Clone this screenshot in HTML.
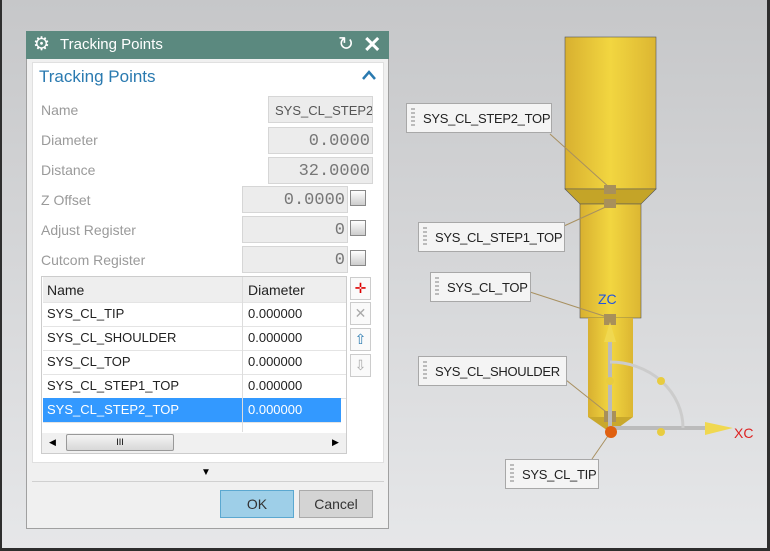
<!DOCTYPE html><html><head><style>
body{margin:0;width:770px;height:551px;overflow:hidden;font-family:"Liberation Sans",sans-serif;position:relative;background:#2e2e2e}
.a{position:absolute}
#vp{left:2px;top:0;width:765px;height:548px;background:linear-gradient(#c6c7c9,#d6d7d9 50%,#e6e7e9)}
.lbl{color:#9a9a9a;font-size:14px}
.fld{background:#ececec;border:1px solid #d6d6d6;font-family:"Liberation Mono",monospace;font-size:17px;color:#777;text-align:right;padding-right:2px;box-sizing:border-box;height:27px;line-height:27px;overflow:hidden;white-space:nowrap}
.cb{width:16px;height:16px;border:1px solid #888;background:linear-gradient(#fff,#ccc);box-sizing:border-box}
.row{left:43px;width:303px;height:24px;font-size:13px;line-height:24px;color:#222;border-bottom:1px solid #e4e4e4}
.row span{position:absolute;left:4px}.row b{position:absolute;left:205px;font-weight:normal}
.sb{width:21px;height:23px;border:1px solid #ccc;background:#fafafa;box-sizing:border-box;text-align:center;font-size:14px;line-height:21px}
.tag{background:#f4f4f4;border:1px solid #a8a8a8;font-size:13px;color:#222;height:30px;line-height:30px;box-sizing:border-box;padding-left:16px;letter-spacing:-0.3px;white-space:nowrap}
.tag:before{content:"";position:absolute;left:4px;top:4px;width:4px;height:20px;background:repeating-linear-gradient(#bbb 0 2px,transparent 2px 4px)}
</style></head><body>
<div id="vp" class="a"></div>
<svg class="a" style="left:0;top:0" width="770" height="551">
<defs><linearGradient id="g" x1="0" x2="1"><stop offset="0" stop-color="#d8b030"/><stop offset=".5" stop-color="#f2d640"/><stop offset="1" stop-color="#dcb632"/></linearGradient></defs>
<rect x="565" y="37" width="91" height="152" fill="url(#g)" stroke="#555" stroke-width=".6"/>
<polygon points="565,189 656,189 641,204 580,204" fill="#c4a428" stroke="#555" stroke-width=".6"/>
<rect x="580" y="204" width="61" height="114" fill="url(#g)" stroke="#555" stroke-width=".6"/>
<rect x="588" y="318" width="45" height="99" fill="url(#g)"/>
<polygon points="588,417 633,417 611,433" fill="#c9a82c"/>
<g stroke="#a89060" stroke-width="1"><line x1="550" y1="134" x2="610" y2="188"/><line x1="564" y1="226" x2="610" y2="205"/><line x1="530" y1="292" x2="610" y2="318"/><line x1="566" y1="380" x2="610" y2="415"/><line x1="592" y1="459" x2="610" y2="433"/></g>
<g fill="#a8905a"><rect x="604" y="185" width="12" height="9"/><rect x="604" y="199" width="12" height="9"/><rect x="604" y="314" width="12" height="11"/><rect x="604" y="411" width="12" height="11"/></g>
<line x1="610" y1="428" x2="610" y2="332" stroke="#bbb" stroke-width="4"/><polygon points="604,342 616,342 610,322" fill="#f0d850"/>
<line x1="610" y1="428" x2="705" y2="428" stroke="#bbb" stroke-width="4"/><polygon points="705,422 705,435 733,428" fill="#f0d850"/>
<path d="M610 362 A 73 66 0 0 1 683 428" fill="none" stroke="#ccc" stroke-width="3"/>
<g fill="#e8cc40"><circle cx="610" cy="381" r="4"/><circle cx="661" cy="381" r="4"/><circle cx="661" cy="432" r="4"/></g>
<circle cx="611" cy="432" r="6" fill="#e06010"/>
<text x="598" y="304" fill="#2255dd" font-size="14" font-family="Liberation Sans">ZC</text>
<text x="734" y="438" fill="#dd2222" font-size="14" font-family="Liberation Sans">XC</text>
</svg>
<div class="a tag" style="left:406px;top:103px;width:146px">SYS_CL_STEP2_TOP</div>
<div class="a tag" style="left:418px;top:222px;width:147px">SYS_CL_STEP1_TOP</div>
<div class="a tag" style="left:430px;top:272px;width:101px">SYS_CL_TOP</div>
<div class="a tag" style="left:418px;top:356px;width:149px">SYS_CL_SHOULDER</div>
<div class="a tag" style="left:505px;top:459px;width:94px">SYS_CL_TIP</div>
<div class="a" style="left:26px;top:31px;width:363px;height:498px;background:#f0f0f0;border:1px solid #a0a0a0;box-sizing:border-box"></div>
<div class="a" style="left:26px;top:31px;width:363px;height:28px;background:#5b897f;color:#fff;font-size:15px;line-height:28px">
<span class="a" style="left:7px;top:0;font-size:19px">⚙</span><span class="a" style="left:34px">Tracking Points</span>
<span class="a" style="left:312px;font-size:19px">↻</span><span class="a" style="left:337px;font-size:22px;font-weight:bold">✕</span></div>
<div class="a" style="left:32px;top:62px;width:352px;height:401px;background:#fff;border:1px solid #e0e0e0;box-sizing:border-box"></div>
<div class="a" style="left:39px;top:67px;font-size:17px;color:#2a7ab0">Tracking Points</div>
<svg class="a" style="left:361px;top:70px" width="16" height="10"><path d="M2 9 L8 2 L14 9" fill="none" stroke="#2a7ab0" stroke-width="2.5"/></svg>
<div class="a lbl" style="left:41px;top:102px">Name</div>
<div class="a lbl" style="left:41px;top:132px">Diameter</div>
<div class="a lbl" style="left:41px;top:162px">Distance</div>
<div class="a lbl" style="left:41px;top:192px">Z Offset</div>
<div class="a lbl" style="left:41px;top:222px">Adjust Register</div>
<div class="a lbl" style="left:41px;top:252px">Cutcom Register</div>
<div class="a fld" style="left:268px;top:96px;width:105px;font-family:'Liberation Sans';font-size:13px;color:#555;text-align:left;padding-left:6px">SYS_CL_STEP2_</div>
<div class="a fld" style="left:268px;top:127px;width:105px">0.0000</div>
<div class="a fld" style="left:268px;top:157px;width:105px">32.0000</div>
<div class="a fld" style="left:242px;top:186px;width:106px">0.0000</div>
<div class="a fld" style="left:242px;top:216px;width:106px">0</div>
<div class="a fld" style="left:242px;top:246px;width:106px">0</div>
<div class="a cb" style="left:350px;top:190px"></div><div class="a cb" style="left:350px;top:220px"></div><div class="a cb" style="left:350px;top:250px"></div>
<div class="a" style="left:41px;top:276px;width:306px;height:178px;border:1px solid #ccc;box-sizing:border-box;background:#fff"></div>
<div class="a row" style="top:277px;height:25px;background:#eee;font-size:14px;line-height:26px"><span>Name</span><b>Diameter</b></div>
<div class="a row" style="top:302px"><span>SYS_CL_TIP</span><b>0.000000</b></div>
<div class="a row" style="top:326px"><span>SYS_CL_SHOULDER</span><b>0.000000</b></div>
<div class="a row" style="top:350px"><span>SYS_CL_TOP</span><b>0.000000</b></div>
<div class="a row" style="top:374px"><span>SYS_CL_STEP1_TOP</span><b>0.000000</b></div>
<div class="a row" style="top:398px;background:#3399ff;color:#fff;width:298px"><span>SYS_CL_STEP2_TOP</span><b>0.000000</b></div>
<div class="a" style="left:242px;top:277px;width:1px;height:155px;background:#ddd"></div>
<div class="a" style="left:42px;top:433px;width:304px;height:20px;background:#f0f0f0"></div>
<div class="a" style="left:66px;top:434px;width:108px;height:17px;background:linear-gradient(#f4f4f4,#d8d8d8);border:1px solid #999;border-radius:2px;box-sizing:border-box;font-size:9px;text-align:center;line-height:15px">III</div>
<div class="a" style="left:49px;top:437px;font-size:9px">◀</div><div class="a" style="left:332px;top:437px;font-size:9px">▶</div>
<div class="a sb" style="left:350px;top:277px;color:#d00">✛</div>
<div class="a sb" style="left:350px;top:302px;color:#aaa">✕</div>
<div class="a sb" style="left:350px;top:328px;color:#2a7ab0">⇧</div>
<div class="a sb" style="left:350px;top:354px;color:#aaa">⇩</div>
<div class="a" style="left:201px;top:467px;font-size:10px">▼</div>
<div class="a" style="left:32px;top:481px;width:352px;height:1px;background:#d0d0d0"></div>
<div class="a" style="left:220px;top:490px;width:74px;height:28px;background:#9ecfe8;border:1px solid #5ba8d0;box-sizing:border-box;text-align:center;line-height:26px;font-size:14px;color:#333">OK</div>
<div class="a" style="left:299px;top:490px;width:74px;height:28px;background:#d4d4d4;border:1px solid #aaa;box-sizing:border-box;text-align:center;line-height:26px;font-size:14px;color:#333">Cancel</div>
</body></html>
